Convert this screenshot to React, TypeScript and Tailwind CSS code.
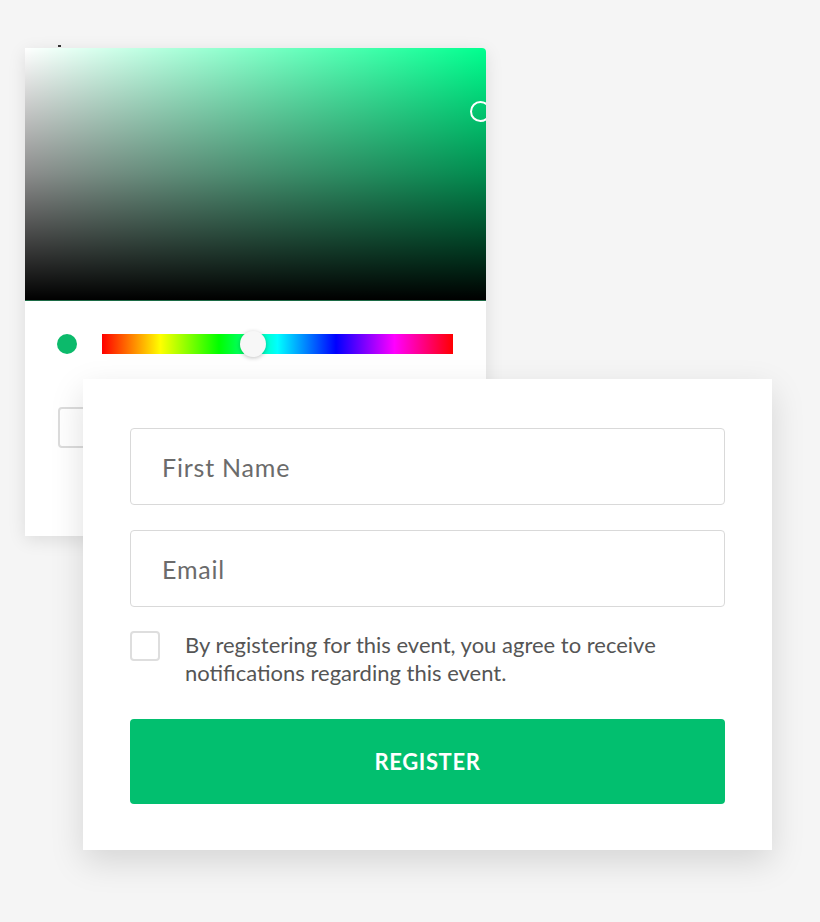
import React from "react";

export default function App() {
  return (
    <div
      className="w-[820px] h-[922px] bg-[#f5f5f5] overflow-hidden"
      style={{ fontFamily: "Lato, 'Open Sans', sans-serif" }}
    >
      <div className="pt-[48px] pl-[25px]">
        {/* Color picker panel */}
        <div className="relative w-[461px] h-[488px] bg-white rounded-tr-[4px] shadow-[0_4px_18px_rgba(0,0,0,0.10)]">
          <div className="absolute left-[33px] -top-[3px] w-[3px] h-[2px] bg-[#333]" />
          <div className="relative h-[253px] overflow-hidden rounded-tr-[4px] bg-[#00ff8f] border-b border-[#1c6a45]">
            <div className="absolute inset-0 bg-[linear-gradient(to_right,#ffffff,rgba(255,255,255,0))]" />
            <div className="absolute inset-0 bg-[linear-gradient(to_bottom,rgba(0,0,0,0),rgba(0,0,0,0.45)_50%,#000000)]" />
            <div className="absolute left-[445px] top-[53px] w-[21px] h-[21px] rounded-full border-2 border-white" />
          </div>
          <div className="flex items-center h-[86px] pl-[32px] pr-[33px]">
            <div className="w-[20px] h-[20px] rounded-full bg-[#0cba6b]" />
            <div className="relative ml-[25px] flex-1 h-[20px] bg-[linear-gradient(to_right,#ff0000,#ffff00,#00ff00,#00ffff,#0000ff,#ff00ff,#ff0000)]">
              <div className="absolute left-[138px] -top-[3px] w-[26px] h-[26px] rounded-full bg-[#f7f7f7] shadow-[0_1px_4px_rgba(0,0,0,0.25)]" />
            </div>
          </div>
          <div className="pl-[33px] pt-[20px]">
            <div className="w-[395px] h-[41px] rounded-[4px] border-2 border-[#dcdcdc]" />
          </div>
        </div>

        {/* Form card */}
        <div className="relative z-10 -mt-[157px] ml-[58px] w-[689px] bg-white shadow-[0_12px_32px_rgba(0,0,0,0.13)] pt-[49px] pb-[46px] pl-[47px] pr-[47px]">
          <div className="flex flex-col gap-[25px]">
            <div className="h-[77px] rounded-[4px] border border-[#d9d9d9] flex items-center pl-[31px] pt-[3px] text-[25px] text-[#6b6b6b] tracking-[0.8px]">
              First Name
            </div>
            <div className="h-[77px] rounded-[4px] border border-[#d9d9d9] flex items-center pl-[31px] pt-[3px] text-[25px] text-[#6b6b6b] tracking-[0.8px]">
              Email
            </div>
          </div>
          <div className="flex mt-[24px]">
            <div className="w-[30px] h-[30px] shrink-0 rounded-[4px] border-2 border-[#dedede]" />
            <div className="ml-[25px] text-[22px] leading-[28px] text-[#555]">
              By registering for this event, you agree to receive
              <br />
              notifications regarding this event.
            </div>
          </div>
          <div className="mt-[32px] h-[85px] rounded-[4px] bg-[#02bf6f] flex items-center justify-center text-white font-bold text-[22px] tracking-[0.6px]">
            REGISTER
          </div>
        </div>
      </div>
    </div>
  );
}
